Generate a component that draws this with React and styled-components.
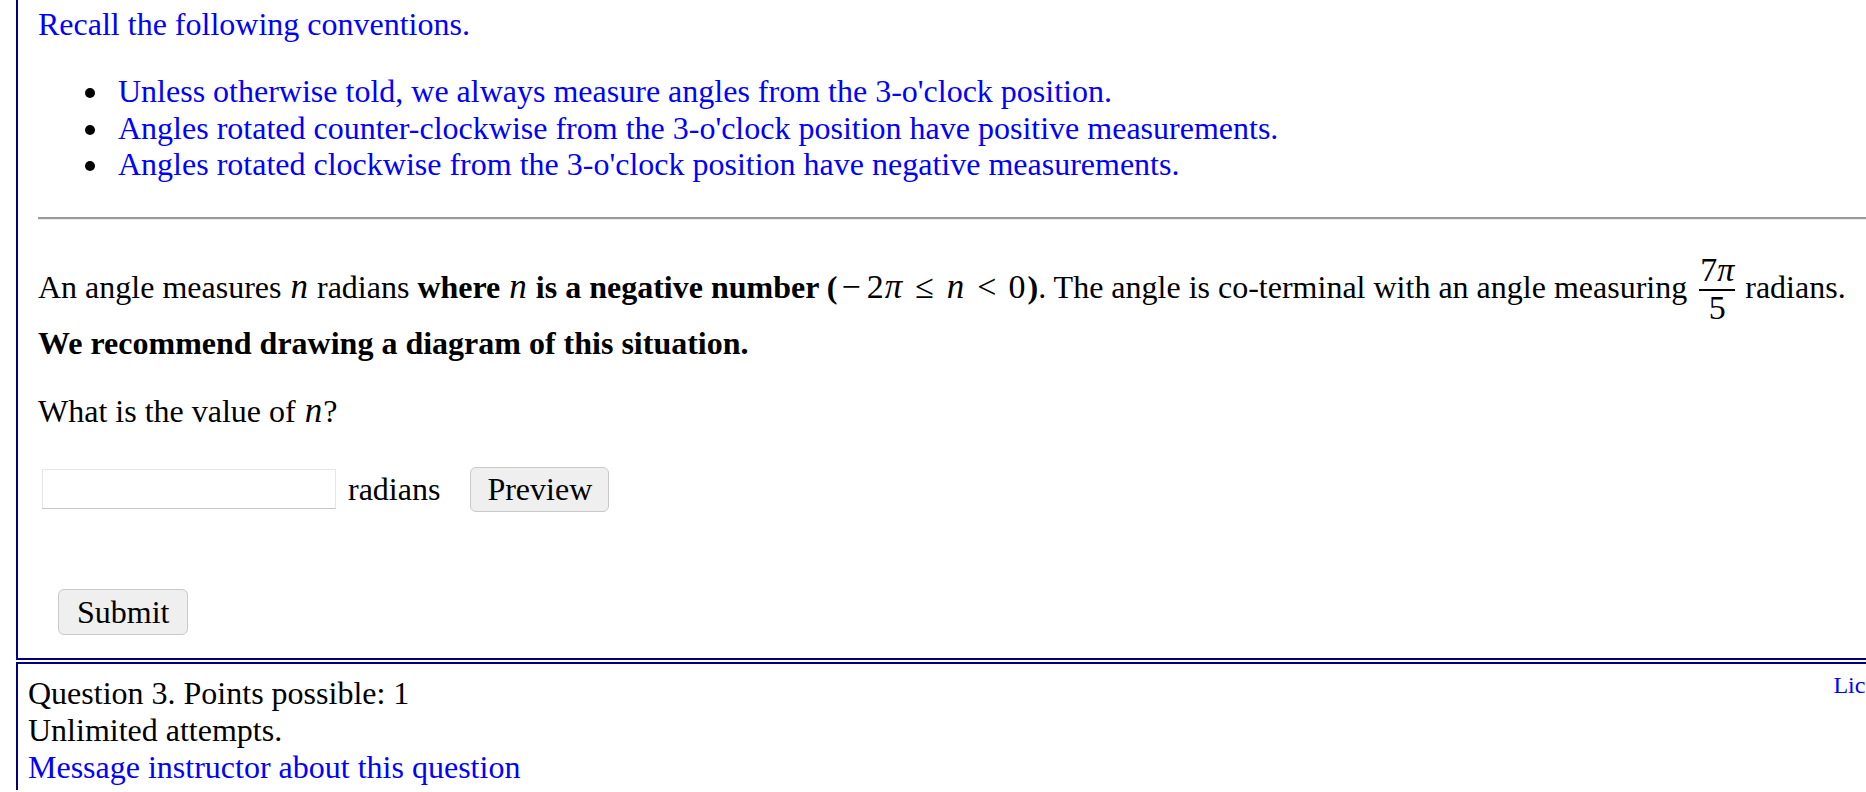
import styled, { createGlobalStyle } from "styled-components";

const GlobalStyle = createGlobalStyle`
  html, body {
    margin: 0;
    background: #fff;
    overflow: hidden;
  }
  body {
    font-family: "Liberation Serif", "Times New Roman", serif;
    font-size: 32px;
    line-height: 1.15;
    color: #000;
  }
`;

const Page = styled.div`
  padding-left: 16px;
`;

const QuestionBox = styled.div`
  border-left: 2px solid #000080;
  border-bottom: 2px solid #000080;
  padding: 6px 0 23px 20px;
  margin-bottom: 2px;
`;

const Intro = styled.div`
  color: #0000ff;
`;

const IntroText = styled.p`
  margin: 0 0 30px;
`;

const Bullets = styled.ul`
  margin: 0;
  padding-left: 73px;
  li {
    margin: 0;
    padding-left: 7px;
  }
  li::marker {
    color: #000;
  }
`;

const Rule = styled.hr`
  border: 0;
  border-top: 2px solid #9a9a9a;
  border-bottom: 1px solid #ececec;
  margin: 34px 0 0;
  height: 0;
`;

const Problem = styled.div`
  margin-top: 33px;
`;

const Line = styled.div`
  margin-top: ${(p) => p.$gap || 0}px;
  white-space: nowrap;
`;

/* MathJax renders math a little larger than the surrounding text */
const MathVar = styled.span`
  font-style: italic;
  font-weight: normal;
  font-size: 35px;
  line-height: 1;
  margin: 0 1px;
`;

const MathNum = styled.span`
  font-weight: normal;
  font-size: 34px;
  line-height: 1;
  margin-right: ${(p) => p.$after || 0}px;
  margin-left: ${(p) => p.$before || 0}px;
`;

const Rel = styled.span`
  font-weight: normal;
  font-size: 34px;
  line-height: 1;
  margin: 0 12px;
`;

const Frac = styled.span`
  display: inline-flex;
  flex-direction: column;
  align-items: center;
  vertical-align: 17px;
  margin: 0 10px 0 12px;
  padding: 0 1px;
  font-size: 34px;
  line-height: 34px;
`;

const FracBar = styled.span`
  align-self: stretch;
  height: 2px;
  background: #000;
  margin: 2px -1px 0;
`;

const AnswerRow = styled.div`
  display: flex;
  align-items: center;
  margin-top: 37px;
`;

const AnswerInput = styled.input`
  box-sizing: border-box;
  width: 294px;
  height: 40px;
  margin-left: 4px;
  border: 1px solid #e6e6e6;
  border-bottom-color: #c6c6c6;
  background: #fff;
  font: inherit;
  outline: none;
`;

const Unit = styled.span`
  margin-left: 12px;
`;

const Button = styled.button`
  font-family: "Liberation Serif", "Times New Roman", serif;
  font-size: 32px;
  line-height: 1.15;
  color: #000;
  background: #efefef;
  border: 1.5px solid #c9c9c9;
  border-radius: 6px;
  padding: ${(p) => (p.$wide ? "4px 18px" : "3px 16px")};
  margin-left: ${(p) => p.$offset}px;
  margin-top: ${(p) => p.$top || 0}px;
  cursor: pointer;
`;

const Footer = styled.div`
  display: flex;
  justify-content: space-between;
  align-items: flex-start;
  border-top: 2px solid #000080;
  border-left: 2px solid #000080;
  padding: 11px 10px 4px;
`;

const FooterInfo = styled.div`
  display: flex;
  flex-direction: column;
`;

const Link = styled.a`
  color: #0000ff;
  text-decoration: none;
  cursor: pointer;
`;

const License = styled(Link)`
  font-size: 24px;
  white-space: nowrap;
  margin-top: -3px;
  margin-right: -52px;
`;

export default function App() {
  return (
    <>
      <GlobalStyle />
      <Page>
        <QuestionBox>
          <Intro>
            <IntroText>Recall the following conventions.</IntroText>
            <Bullets>
              <li>Unless otherwise told, we always measure angles from the 3-o'clock position.</li>
              <li>Angles rotated counter-clockwise from the 3-o'clock position have positive measurements.</li>
              <li>Angles rotated clockwise from the 3-o'clock position have negative measurements.</li>
            </Bullets>
          </Intro>
          <Rule />
          <Problem>
            <Line>
              An angle measures <MathVar>n</MathVar> radians{" "}
              <b>
                where <MathVar>n</MathVar> is a negative number (
                <MathNum $before={4} $after={6}>−</MathNum>
                <MathNum>2</MathNum>
                <MathVar>π</MathVar>
                <Rel>≤</Rel>
                <MathVar>n</MathVar>
                <Rel>&lt;</Rel>
                <MathNum $after={2}>0</MathNum>)
              </b>
              . The angle is co-terminal with an angle measuring
              <Frac>
                <span>
                  7<i>π</i>
                </span>
                <FracBar />
                <span>5</span>
              </Frac>
              radians.
            </Line>
            <Line>
              <b>We recommend drawing a diagram of this situation.</b>
            </Line>
            <Line $gap={31}>
              What is the value of <MathVar>n</MathVar>?
            </Line>
          </Problem>
          <AnswerRow>
            <AnswerInput type="text" />
            <Unit>radians</Unit>
            <Button $offset={30}>Preview</Button>
          </AnswerRow>
          <Button $wide $offset={20} $top={77}>
            Submit
          </Button>
        </QuestionBox>
        <Footer>
          <FooterInfo>
            <span>Question 3. Points possible: 1</span>
            <span>Unlimited attempts.</span>
            <Link>Message instructor about this question</Link>
          </FooterInfo>
          <License>License</License>
        </Footer>
      </Page>
    </>
  );
}
